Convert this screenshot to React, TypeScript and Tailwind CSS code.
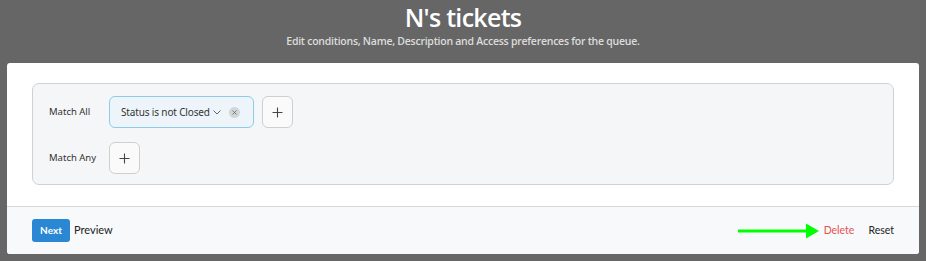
import React from "react";

function Plus() {
  return (
    <button className="flex h-[32px] w-[31px] items-center justify-center rounded-[6px] border border-[#cfcfcf] bg-[#fafafa]">
      <svg width="11" height="11" viewBox="0 0 11 11">
        <path d="M5.5 0.5v10M0.5 5.5h10" stroke="#444" strokeWidth="1.1" />
      </svg>
    </button>
  );
}

export default function App() {
  return (
    <div className="h-[261px] w-[926px] overflow-hidden bg-[#666666]" style={{ fontFamily: '"Noto Sans", sans-serif' }}>
      <div className="flex h-[63px] flex-col items-center pt-[2px]">
        <div className="text-[25px] font-semibold leading-[30px] tracking-[-0.7px] text-white" style={{ fontFamily: '"Open Sans", sans-serif' }}>
          N's tickets
        </div>
        <div className="mt-[2px] text-[10.5px] font-semibold leading-[14px] tracking-[-0.25px] text-[#dcdcdc]" style={{ fontFamily: '"Open Sans", sans-serif' }}>
          Edit conditions, Name, Description and Access preferences for the queue.
        </div>
      </div>
      <div className="mx-[7px] flex h-[191px] flex-col overflow-hidden rounded-[3px] bg-white">
        <div className="px-[25px] pb-[21px] pt-[20px]">
          <div className="flex h-[102px] flex-col gap-[14px] rounded-[7px] border border-[#cfd1d3] bg-[#f5f6f7] pl-[16px] pt-[12px]">
            <div className="flex items-center">
              <div className="w-[60px] text-[9.5px] text-[#333]">Match All</div>
              <div className="flex h-[32px] w-[145px] items-center whitespace-nowrap rounded-[6px] border border-[#8ccbea] bg-[#eef5fa] pl-[11px]">
                <span className="text-[10px] tracking-[-0.15px] text-[#333]">Status is not Closed</span>
                <svg className="ml-[3px]" width="8" height="5" viewBox="0 0 8 5">
                  <path d="M0.5 0.5l3.5 3.5 3.5-3.5" stroke="#555" strokeWidth="0.9" fill="none" />
                </svg>
                <span className="ml-[8px] flex h-[11px] w-[11px] items-center justify-center rounded-full bg-[#d3d5d7]">
                  <svg width="5" height="5" viewBox="0 0 5 5">
                    <path d="M0.5 0.5l4 4M4.5 0.5l-4 4" stroke="#666" strokeWidth="0.8" />
                  </svg>
                </span>
              </div>
              <div className="ml-[8px]">
                <Plus />
              </div>
            </div>
            <div className="flex items-center">
              <div className="w-[60px] text-[9.5px] text-[#333]">Match Any</div>
              <Plus />
            </div>
          </div>
        </div>
        <div className="flex flex-1 items-center border-t border-[#d8d8d8] bg-[#f8f9fa] pl-[25px] pr-[25px]" style={{ fontFamily: '"Lato", sans-serif' }}>
          <button className="flex h-[23px] w-[38px] items-center justify-center rounded-[3px] bg-[#2a87d4] text-[10px] font-bold text-white">
            Next
          </button>
          <span className="ml-[4px] text-[11px] text-[#222]">Preview</span>
          <div className="ml-auto flex items-center">
            <svg width="82" height="16" viewBox="0 0 82 16">
              <path d="M0 8H70" stroke="#00ff00" strokeWidth="3" />
              <path d="M68 0.5L81 8L68 15.5Z" fill="#00ff00" />
            </svg>
            <span className="ml-[4px] text-[10.5px] text-[#e4534f]">Delete</span>
            <span className="ml-[14px] text-[10.5px] text-[#222]">Reset</span>
          </div>
        </div>
      </div>
    </div>
  );
}
